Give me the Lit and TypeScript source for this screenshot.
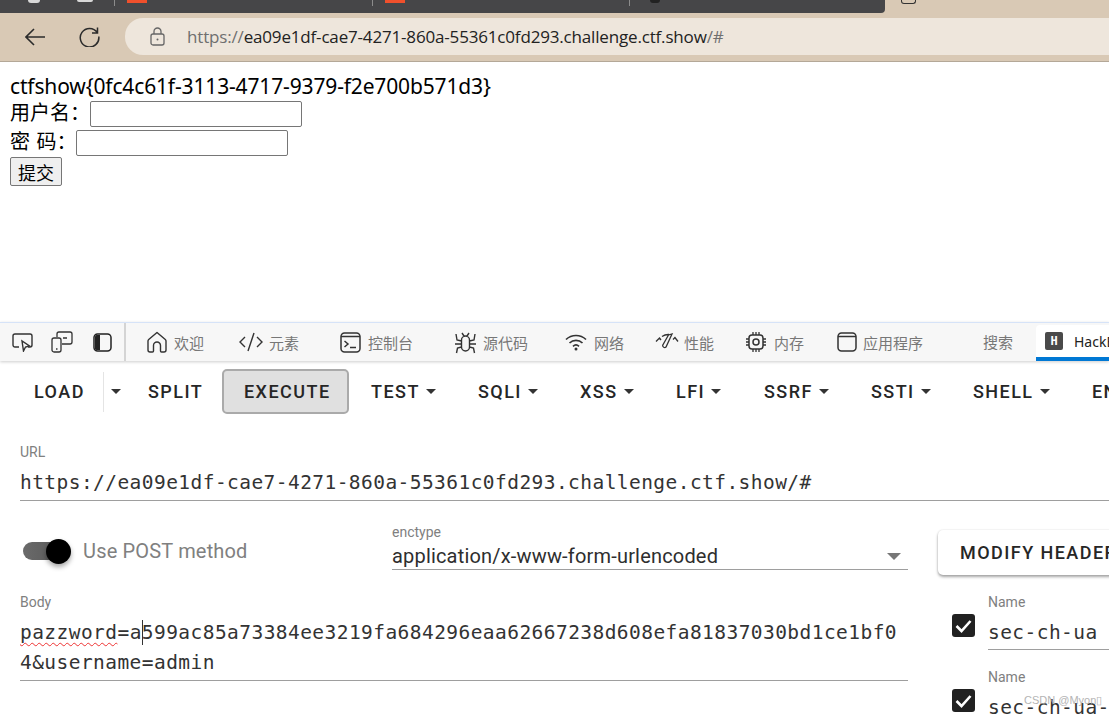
import { LitElement, html, css, svg } from "lit";
import { customElement } from "lit/decorators.js";

const S = (w: number, h: number, vb: string, body: unknown, cls = "ic") =>
  html`<svg class=${cls} width=${w} height=${h} viewBox=${vb} fill="none" stroke="currentColor">${body}</svg>`;

const icons: Record<string, unknown> = {
  home: S(22, 22, "0 0 22 22", svg`<path stroke-width="1.4" d="M2 19a2 2 0 0 0 2 2h2.500a1 1 0 0 0 1-1v-5.500a3.500 3.500 0 0 1 7 0V20a1 1 0 0 0 1 1H18a2 2 0 0 0 2-2V10a2 2 0 0 0-.7-1.500L11 1.500 2.700 8.500A2 2 0 0 0 2 10z" stroke-linejoin="round"/>`),
  code: S(24, 20, "0 0 24 20", svg`<path stroke-width="1.4" d="M6 5 1 10l5 5M18 5l5 5-5 5M15 1 9 19"/>`),
  console: S(21, 21, "0 0 21 21", svg`<rect x="1" y="1" width="19" height="19" rx="3.500" stroke-width="1.500"/><path stroke-width="1.500" d="M1 4.500h19M4.500 9l3.500 3-3.500 3M10 15.500h6"/>`),
  bug: S(23, 23, "0 0 23 23", svg`<path stroke-width="1.400" d="M7.500 9a4 4 0 0 1 8 0v7a4 4 0 0 1-8 0zM8 2l2 3M15 2l-2 3M7.500 10 3 9 2 3M15.500 10l4.500-1 1-6M7.500 13H1M15.500 13H22M7.500 16 3.500 17 2.500 22M15.500 16l4 1 1 5"/>`),
  wifi: S(22, 18, "0 0 22 18", svg`<path stroke-width="1.700" d="M1 6.500a14.500 14.500 0 0 1 20 0M4.500 10a9.500 9.500 0 0 1 13 0M8 13.300a4.500 4.500 0 0 1 6 0"/><circle cx="11" cy="16" r="1.500" fill="currentColor" stroke="none"/>`),
  perf: S(24, 18, "0 0 24 18", svg`<path stroke-width="1.300" d="M1 8.500 4.500 5l1.500 2M7 3.500A11 11 0 0 1 14 1.500M19.500 4l3.500 4.500M18 6.500l2-2M17 1l-6 13a2 2 0 0 1-3.300-1.800L13.500 2z"/>`),
  chip: S(22, 22, "0 0 22 22", svg`<rect x="4" y="4" width="14" height="14" rx="3" stroke-width="1.500"/><circle cx="11" cy="11" r="3" stroke-width="1.500"/><path stroke-width="1.300" d="M8 1v3M11 1v3M14 1v3M8 18v3M11 18v3M14 18v3M1 8h3M1 11h3M1 14h3M18 8h3M18 11h3M18 14h3"/>`),
  app: S(20, 20, "0 0 20 20", svg`<rect x="1" y="1" width="18" height="18" rx="3.500" stroke-width="1.500"/><path stroke-width="1.500" d="M1 4.500h18"/>`),
};

const tabs = [
  { w: 93, icon: "home", gap: 6, t: "欢迎" },
  { w: 101, icon: "code", gap: 6, t: "元素" },
  { w: 114, icon: "console", gap: 7, t: "控制台" },
  { w: 111, icon: "bug", gap: 6, t: "源代码" },
  { w: 90, icon: "wifi", gap: 7, t: "网络" },
  { w: 90, icon: "perf", gap: 5, t: "性能" },
  { w: 92, icon: "chip", gap: 7, t: "内存" },
  { w: 146, icon: "app", gap: 6, t: "应用程序" },
];

const menu = [
  { w: 74, t: "SPLIT", c: false, x: "" },
  { t: "EXECUTE", x: "exec", c: false, w: 127 },
  { w: 107, t: "TEST", c: true, x: "" },
  { w: 102, t: "SQLI", c: true, x: "" },
  { w: 96, t: "XSS", c: true, x: "" },
  { w: 88, t: "LFI", c: true, x: "" },
  { w: 107, t: "SSRF", c: true, x: "" },
  { w: 102, t: "SSTI", c: true, x: "" },
  { w: 119, t: "SHELL", c: true, x: "" },
  { w: 60, t: "ENCODING", c: false, x: "" },
];

@customElement("app-root")
export class AppRoot extends LitElement {
  static styles = css`
    :host { display: block; width: 100%; height: 715px; overflow: hidden; position: relative; background: #fff; font-family: Roboto, sans-serif; }
    .strip { height: 13px; background: #d9c9b5; display: flex; }
    .dark { width: 885px; height: 13px; background: #464648; border-bottom-right-radius: 4px; display: flex; align-items: flex-start; overflow: hidden; flex: none; }
    .tabcell { display: flex; align-items: flex-start; height: 6px; box-sizing: border-box; border-right: 1px solid #8c8c8c; flex: none; }
    .tabcell.c1 { width: 115px; padding-left: 28px; gap: 37px; }
    .tabcell.c2 { width: 258px; padding-left: 12px; }
    .tabcell.c3 { width: 257px; padding-left: 12px; }
    .frag { width: 12px; height: 3px; background: #d8d8d8; border-radius: 0 0 3px 3px; }
    .frag.w { width: 16px; height: 2px; }
    .red { width: 20px; height: 3px; background: #f0502c; }
    .glyph { margin: 0 0 0 20px; width: 10px; height: 3px; background: #222; border-radius: 0 0 4px 4px; }
    .wintab { width: 15px; height: 4px; margin-left: 16px; border: 1.500px solid #333; border-top: 0; border-radius: 0 0 3px 3px; box-sizing: border-box; }
    .bar { background: #d9c9b5; border-bottom: 1px solid #b4a898; box-sizing: border-box; height: 49px; display: flex; color: #2b2b2b; }
    .nav { width: 125px; flex: none; display: flex; align-items: center; padding: 0 0 0 25px; box-sizing: border-box; gap: 34px; height: 47px; }
    .pill { flex: 1; height: 37px; margin-top: 5px; background: #eee6dc; border-radius: 18px 0 0 18px; display: flex; align-items: center; padding-left: 25px; }
    .lock { color: #666; flex: none; }
    .addr { margin-left: 22px; font: 17px "Open Sans", "Noto Sans", sans-serif; color: #222; white-space: nowrap; letter-spacing: -.17px; }
    .addr span { color: #6f6f6f; }

    .page { height: 260px; box-sizing: border-box; padding: 11px 0 0 10px; color: #000; font: 20px/1.2 "Noto Sans CJK SC", sans-serif; }
    .flag { height: 26px; line-height: 26px; white-space: nowrap; font-family: "Noto Sans", sans-serif; font-size: 21px; letter-spacing: -.15px; }
    .frow { display: flex; align-items: center; height: 29px; }
    .fl { white-space: pre; word-spacing: 2px; margin-top: -3px; }
    .fi { width: 212px; height: 26px; box-sizing: border-box; border: 1px solid #767676; border-radius: 2px; background: #fff; padding: 0; margin: 0; }
    .sub { width: 52px; height: 29px; box-sizing: border-box; border: 1px solid #767676; border-radius: 2px; background: #efefef; font: 18px "Noto Sans CJK SC", sans-serif; color: #000; padding: 0; display: block; }

    .dt { height: 39px; box-sizing: border-box; background: #f7f7f7; border-top: 1px solid #d6e3f8; display: flex; color: #7a7a7a; position: relative; z-index: 1; box-shadow: 0 1px 3px rgba(0,0,0,.2); }
    .tools { width: 126px; flex: none; box-sizing: border-box; display: flex; align-items: center; padding-left: 12px; border-right: 2px solid #d4d4d4; color: #333; height: 38px; }
    .tools svg + svg { margin-left: 18px; }
    .tools svg:last-child { margin-left: 20px; }
    .tab { flex: none; display: flex; align-items: center; font: 15px "Noto Sans CJK SC", sans-serif; box-sizing: border-box; white-space: nowrap; color: #777; }
    .tab .ic { color: #333; flex: none; }
    .tabs { display: flex; padding-left: 20px; }
    .search { width: 53px; box-sizing: border-box; font: 15px/38px "Noto Sans CJK SC", sans-serif; color: #777; flex: none; }
    .active { flex: 1; margin-top: 2px; background: #fff; border-bottom: 4px solid #0078d4; border-radius: 4px 0 0 0; box-sizing: border-box; display: flex; align-items: center; padding-left: 9px; gap: 11px; font: 14px "Noto Sans", sans-serif; color: #222; white-space: nowrap; overflow: hidden; height: 36px; }
    .hlogo { width: 18px; height: 18px; background: #4a4a4a; border-radius: 2px; color: #fff; font: 700 12px/18px "DejaVu Sans Mono", monospace; text-align: center; flex: none; }

    .menu { display: flex; align-items: center; height: 45px; margin-top: 8px; padding-left: 34px; font-weight: 500; font-size: 18px; letter-spacing: 1.450px; color: #262626; white-space: nowrap; }
    .mi { flex: none; display: flex; align-items: center; height: 45px; box-sizing: border-box; }
    .mi.exec { background: #e0e0e0; border: 2px solid #aaa; border-radius: 5px; padding-left: 20px; margin-right: 22px; }
    .load { width: 69px; flex: none; border-right: 1px solid #e4e4e4; height: 40px; display: flex; align-items: center; }
    .caretbox { width: 44px; flex: none; padding-left: 7px; box-sizing: border-box; display: flex; }
    .caret { width: 0; height: 0; border-left: 5.500px solid transparent; border-right: 5.500px solid transparent; border-top: 5.500px solid #333; flex: none; }
    .mi .caret { margin-left: 6px; }

    .main { padding-left: 20px; }
    .lab { font-size: 14px; line-height: 16px; color: #808080; height: 16px; }
    .url { margin-top: 30px; }
    .mono { font-family: "DejaVu Sans Mono", monospace; font-size: 19.500px; letter-spacing: .44px; color: #333; white-space: nowrap; }
    .urlv { height: 34px; line-height: 30px; padding-top: 1px; box-sizing: border-box; border-bottom: 1px solid #9e9e9e; margin-top: 7px; }
    .grid { display: grid; grid-template-columns: 888px 1fr; column-gap: 30px; margin-top: 23px; }
    .r1 { display: flex; height: 46px; }
    .post { width: 372px; flex: none; display: flex; align-items: center; padding-left: 3px; box-sizing: border-box; font-size: 20px; letter-spacing: .17px; color: #808080; height: 54px; gap: 12px; }
    .sw { width: 48px; height: 24px; position: relative; flex: none; }
    .track { width: 36px; height: 18px; margin-top: 3px; border-radius: 9px; background: linear-gradient(90deg, #6a6a6a, #5a5a5a); }
    .knob { position: absolute; right: 0; top: 0; width: 25px; height: 25px; border-radius: 50%; background: #000; box-shadow: 0 3px 5px rgba(0,0,0,.35); }
    .sel { flex: 1; }
    .selv { height: 30px; line-height: 34px; font-size: 20px; letter-spacing: .18px; color: #2e2e2e; border-bottom: 1px solid #9e9e9e; display: flex; justify-content: space-between; align-items: center; padding-right: 7px; box-sizing: border-box; }
    .selv span:first-child { padding-top: 2px; }
    .selv .caret { border-left-width: 7.500px; border-right-width: 7.500px; border-top: 7.500px solid #777; margin-top: 3px; }
    .body { margin-top: 24px; }
    .bodyv { margin-top: 7px; padding-top: 1px; line-height: 30px; border-bottom: 1px solid #9e9e9e; padding-bottom: 2px; }
    .bodyv div { height: 30px; }
    .sq { text-decoration: underline wavy #e33 1.200px; text-underline-offset: 3px; text-decoration-skip-ink: none; }
    .cur { display: inline-block; width: 1px; height: 25px; background: #333; vertical-align: -6px; margin: 0 -1px 0 0; }
    .mod { width: 240px; height: 45px; margin-top: 6px; background: #fff; border-radius: 5px 0 0 5px; box-shadow: 0 2px 3px rgba(0,0,0,.35), 0 0 2px rgba(0,0,0,.12); padding-left: 22px; display: flex; align-items: center; font-weight: 500; font-size: 18px; letter-spacing: 1.450px; color: #262626; white-space: nowrap; box-sizing: border-box; }
    .hr { display: flex; margin: 19px 0 0 14px; gap: 13px; }
    .cb { width: 23px; height: 23px; margin-top: 20px; background: #212121; border-radius: 3px; flex: none; color: #fff; display: flex; align-items: center; justify-content: center; }
    .hf { flex: 1; min-width: 0; }
    .hv { height: 40px; line-height: 46px; border-bottom: 1px solid #9e9e9e; box-sizing: border-box; overflow: hidden; }
    .wm { position: absolute; left: 1024px; top: 694px; font: 11px "Liberation Sans", sans-serif; color: #a8a8a8; white-space: nowrap; opacity: .85; }
  `;

  render() {
    return html`
      <div class="strip">
        <div class="dark">
          <div class="tabcell c1"><span class="frag"></span><span class="frag w"></span></div>
          <div class="tabcell c2"><span class="red"></span></div>
          <div class="tabcell c3"><span class="red"></span></div>
          <span class="glyph"></span>
        </div>
        <span class="wintab"></span>
      </div>
      <div class="bar">
        <div class="nav">
          <svg width="20" height="18" viewBox="0 0 20 18" fill="none" stroke="currentColor" stroke-width="1.600"><path d="M20 9H1M9 1 1 9l8 8"/></svg>
          <svg width="21" height="21" viewBox="0 0 21 21" fill="none" stroke="currentColor" stroke-width="1.500"><path d="M18.500 1.500V7H13M18.300 6.500A9.300 9.300 0 1 0 19.800 10.500"/></svg>
        </div>
        <div class="pill">
          <svg class="lock" width="15" height="19" viewBox="0 0 15 19" fill="none" stroke="currentColor" stroke-width="1.300"><rect x="1" y="7" width="13" height="11" rx="2"/><path d="M4 7V4.500a3.500 3.500 0 0 1 7 0V7"/><circle cx="7.500" cy="12.500" r="1" fill="currentColor" stroke="none"/></svg>
          <div class="addr"><span>https://</span>ea09e1df-cae7-4271-860a-55361c0fd293.challenge.ctf.show<span>/#</span></div>
        </div>
      </div>

      <div class="page">
        <div class="flag">ctfshow{0fc4c61f-3113-4717-9379-f2e700b571d3}</div>
        <div class="frow"><span class="fl">用户名：</span><input class="fi" type="text" /></div>
        <div class="frow"><span class="fl">密 码：</span><input class="fi" type="password" /></div>
        <button class="sub">提交</button>
      </div>

      <div class="dt">
        <div class="tools">
          <svg width="21" height="20" viewBox="0 0 21 20" fill="none" stroke="currentColor" stroke-width="1.400"><path d="M7 15H3a2 2 0 0 1-2-2V4a2 2 0 0 1 2-2h15a2 2 0 0 1 2 2v9a2 2 0 0 1-2 2h-2"/><path d="m10 9 1.500 10 2-4 4-1z" fill="#f7f7f7"/></svg>
          <svg width="22" height="22" viewBox="0 0 22 22" fill="none" stroke="currentColor" stroke-width="1.300"><path d="M6 6V3a2 2 0 0 1 2-2h11a2 2 0 0 1 2 2v8a2 2 0 0 1-2 2h-8M12 7h4"/><rect x="1" y="7" width="9" height="14" rx="2"/><path d="M5 18h1.500"/></svg>
          <svg width="19" height="19" viewBox="0 0 19 19" fill="none" stroke="#222" stroke-width="1.500"><rect x="1" y="1" width="17" height="17" rx="3.500"/><path d="M2 3.500A1.500 1.500 0 0 1 3.500 2H7v15H3.500A1.500 1.500 0 0 1 2 15.500z" fill="#222" stroke="none"/></svg>
        </div>
        <div class="tabs">
          ${tabs.map(
            (t) => html`<div class="tab" style="width:${t.w}px">${icons[t.icon]}<span style="margin-left:${t.gap}px">${t.t}</span></div>`
          )}
        </div>
        <div class="search">搜索</div>
        <div class="active"><span class="hlogo">H</span><span>HackBar</span></div>
      </div>

      <div class="menu">
        <div class="load">LOAD</div>
        <div class="caretbox"><span class="caret"></span></div>
        ${menu.map(
          (m) => html`<div class="mi ${m.x}" style="width:${m.w}px">${m.t}${m.c ? html`<span class="caret"></span>` : ""}</div>`
        )}
      </div>

      <div class="main">
        <div class="url">
          <div class="lab">URL</div>
          <div class="mono urlv">https://ea09e1df-cae7-4271-860a-55361c0fd293.challenge.ctf.show/#</div>
        </div>
        <div class="grid">
          <div>
            <div class="r1">
              <div class="post">
                <div class="sw"><div class="track"></div><div class="knob"></div></div>
                <span>Use POST method</span>
              </div>
              <div class="sel">
                <div class="lab">enctype</div>
                <div class="selv"><span>application/x-www-form-urlencoded</span><span class="caret"></span></div>
              </div>
            </div>
            <div class="body">
              <div class="lab">Body</div>
              <div class="mono bodyv">
                <div><span class="sq">pazzword</span>=a<span class="cur"></span>599ac85a73384ee3219fa684296eaa62667238d608efa81837030bd1ce1bf0</div>
                <div>4&amp;username=admin</div>
              </div>
            </div>
          </div>
          <div>
            <div class="mod">MODIFY HEADER</div>
            ${["sec-ch-ua", "sec-ch-ua-mobile"].map(
              (n) => html`<div class="hr">
                <div class="cb"><svg width="17" height="14" viewBox="0 0 17 14" fill="none" stroke="currentColor" stroke-width="2.600"><path d="m1.500 7 5 5 9-10"/></svg></div>
                <div class="hf"><div class="lab">Name</div><div class="mono hv">${n}</div></div>
              </div>`
            )}
          </div>
        </div>
      </div>
      <div class="wm">CSDN @Myon▯</div>
    `;
  }
}
